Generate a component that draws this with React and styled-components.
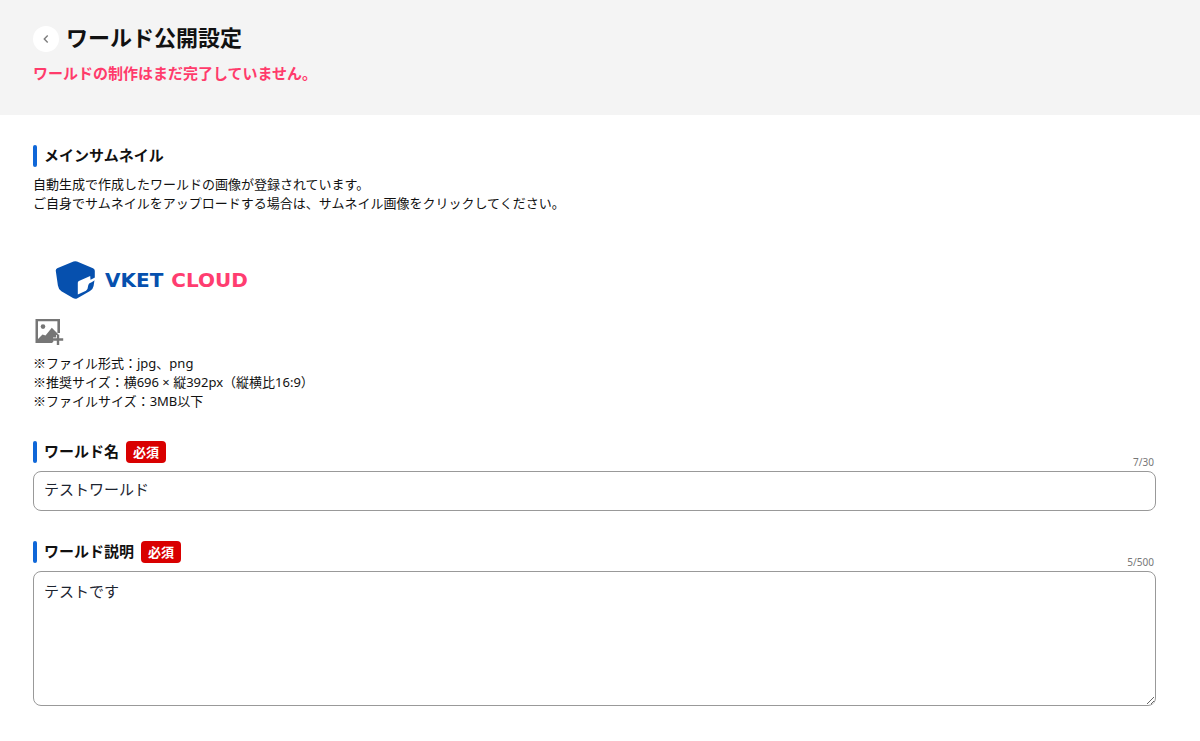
import React, { useState } from "react";
import styled, { createGlobalStyle } from "styled-components";

const GlobalStyle = createGlobalStyle`
  *, *::before, *::after { box-sizing: border-box; }
  body {
    margin: 0;
    background: #fff;
    color: #111;
    font-family: "Noto Sans", "Noto Sans CJK JP", sans-serif;
    font-size: 13px;
    line-height: 19px;
  }
`;

const Header = styled.header`
  background: #f4f4f4;
  padding: 21px 45px 31px 33px;
`;

const TitleRow = styled.div`
  display: flex;
  align-items: center;
  gap: 7px;
`;

const BackButton = styled.button`
  display: flex;
  align-items: center;
  justify-content: center;
  width: 26px;
  height: 26px;
  margin-top: 4px;
  padding: 0;
  border: 0;
  border-radius: 50%;
  background: #fff;
  color: #7c7c7c;
  cursor: pointer;
`;

const Title = styled.h1`
  margin: 0;
  font-size: 22px;
  line-height: 32px;
  font-weight: 700;
`;

const Warning = styled.p`
  margin: 9px 0 0;
  color: #ff3b6b;
  font-size: 15px;
  line-height: 22px;
  font-weight: 700;
`;

const Content = styled.main`
  padding: 30px 44px 0 33px;
`;

const Section = styled.section`
  margin-bottom: 30px;
`;

const LabelRow = styled.div`
  display: flex;
  align-items: center;
  gap: 7px;
  height: 22px;
`;

const Heading = styled.div`
  display: flex;
  align-items: flex-start;
  gap: 7px;
  font-size: 15px;
  line-height: 20px;
  font-weight: 700;

  &::before {
    content: "";
    width: 4px;
    height: 22px;
    border-radius: 2px;
    background: #0f67d8;
  }

  h2 {
    margin: 0;
    font: inherit;
  }
`;

const Required = styled.span`
  padding: 0 7px;
  border-radius: 4px;
  background: #d90000;
  color: #fff;
  font-size: 13px;
  line-height: 22px;
  font-weight: 700;
`;

const Text = styled.p`
  margin: 8px 0 0;
`;

const Mark = styled.span`
  font-family: "Noto Sans CJK JP", sans-serif;
  line-height: 1;
`;

const ThumbnailButton = styled.button`
  display: flex;
  align-items: center;
  gap: 9px;
  width: 238px;
  height: 77px;
  margin-top: 28px;
  padding: 0 0 0 22px;
  border: 0;
  background: transparent;
  cursor: pointer;
`;

const LogoText = styled.span`
  display: flex;
  gap: 8px;
  color: #0650ae;
  font-family: "DejaVu Sans", sans-serif;
  font-size: 20px;
  line-height: 24px;
  font-weight: 700;
`;

const Pink = styled.span`
  color: #ff3d70;
`;

const AddImageButton = styled.button`
  display: block;
  width: 32px;
  height: 28px;
  padding: 0;
  border: 0;
  background: transparent;
  cursor: pointer;

  svg { display: block; }
`;

const Field = styled.div`
  margin-bottom: 30px;
`;

const FieldHead = styled.div`
  display: flex;
  justify-content: space-between;
  align-items: flex-end;
  height: 30px;
`;

const FieldLabel = styled.div`
  align-self: flex-start;
`;

const Counter = styled.output`
  padding-right: 2px;
  color: #777;
  font-size: 10px;
  line-height: 18px;
`;

const controlStyle = `
  display: block;
  width: 100%;
  border: 1px solid #999;
  border-radius: 8px;
  background: #fff;
  color: #1c2430;
  font-family: inherit;
  font-size: 15px;
  line-height: 22px;
`;

const TextInput = styled.input`
  ${controlStyle}
  height: 40px;
  padding: 0 10px 6px;
`;

const TextArea = styled.textarea`
  ${controlStyle}
  height: 135px;
  padding: 8px 10px;
  resize: vertical;
`;

const ChevronIcon = () => (
  <svg width="8" height="10" viewBox="0 0 8 10" fill="none" stroke="currentColor" strokeWidth="1.4" aria-hidden="true">
    <path d="M5.7 1.6 2.3 5l3.4 3.4" />
  </svg>
);

const ShieldIcon = () => (
  <svg width="41" height="38" viewBox="0 0 41 38" aria-hidden="true">
    <path
      fill="#0650ae"
      d="M18.5.6Q20.2-.2 22 .6L38 7.2Q39.7 8 39.8 9.8V17L38.6 25Q38 28.3 35 30L22.4 37.2Q20.2 38.3 18 37L6.4 30.3Q3.4 28.2 2.9 24.5L.8 10Q.5 8 2.2 7.2Z"
    />
    <path
      fill="#fff"
      d="M22.8 21.8Q22.8 20.6 23.9 20.1L35.2 15 35.5 18.8 41 16V18.6L36.2 21.4Q33.4 22 33 25.4 32.8 28.8 31 29.8L22.8 33.6Z"
    />
  </svg>
);

const AddImageIcon = () => (
  <svg width="32" height="28" viewBox="0 0 32 28" aria-hidden="true">
    <path fill="#767676" fillRule="evenodd" d="M2.5 1H27V15H24.4V3.2H5V23H19.5V25H2.5Z" />
    <circle cx="10" cy="8.6" r="2.3" fill="#767676" />
    <path fill="#767676" d="M4.5 24V21.5L9.5 16.5 12.5 17.5 18.8 9.8 25 16V20L20 24Z" />
    <path stroke="#fff" strokeWidth="4" d="M25 17V27M20 21.5H31" />
    <path stroke="#767676" strokeWidth="2.4" d="M25 16.5V27M19.8 21.5H30.2" />
  </svg>
);

function FormField({ id, label, max, as: Control, value, onChange, ...rest }) {
  return (
    <Field>
      <FieldHead>
        <FieldLabel>
          <LabelRow>
            <Heading as="label" htmlFor={id}>{label}</Heading>
            <Required>必須</Required>
          </LabelRow>
        </FieldLabel>
        <Counter htmlFor={id}>{value.length}/{max}</Counter>
      </FieldHead>
      <Control id={id} value={value} maxLength={max} onChange={(e) => onChange(e.target.value)} {...rest} />
    </Field>
  );
}

export default function App() {
  const [name, setName] = useState("テストワールド");
  const [description, setDescription] = useState("テストです");

  return (
    <>
      <GlobalStyle />
      <Header>
        <TitleRow>
          <BackButton type="button" aria-label="戻る"><ChevronIcon /></BackButton>
          <Title>ワールド公開設定</Title>
        </TitleRow>
        <Warning>ワールドの制作はまだ完了していません。</Warning>
      </Header>
      <Content>
        <Section>
          <Heading><h2>メインサムネイル</h2></Heading>
          <Text>
            自動生成で作成したワールドの画像が登録されています。<br />
            ご自身でサムネイルをアップロードする場合は、サムネイル画像をクリックしてください。
          </Text>
          <ThumbnailButton type="button">
            <ShieldIcon />
            <LogoText><span>VKET</span><Pink>CLOUD</Pink></LogoText>
          </ThumbnailButton>
          <AddImageButton type="button" aria-label="画像を追加"><AddImageIcon /></AddImageButton>
          <Text>
            <Mark>※</Mark>ファイル形式：jpg、png<br />
            <Mark>※</Mark>推奨サイズ：横696 × 縦392px（縦横比16:9）<br />
            <Mark>※</Mark>ファイルサイズ：3MB以下
          </Text>
        </Section>
        <FormField id="world-name" label="ワールド名" max={30} as={TextInput} value={name} onChange={setName} />
        <FormField id="world-description" label="ワールド説明" max={500} as={TextArea} value={description} onChange={setDescription} />
      </Content>
    </>
  );
}
